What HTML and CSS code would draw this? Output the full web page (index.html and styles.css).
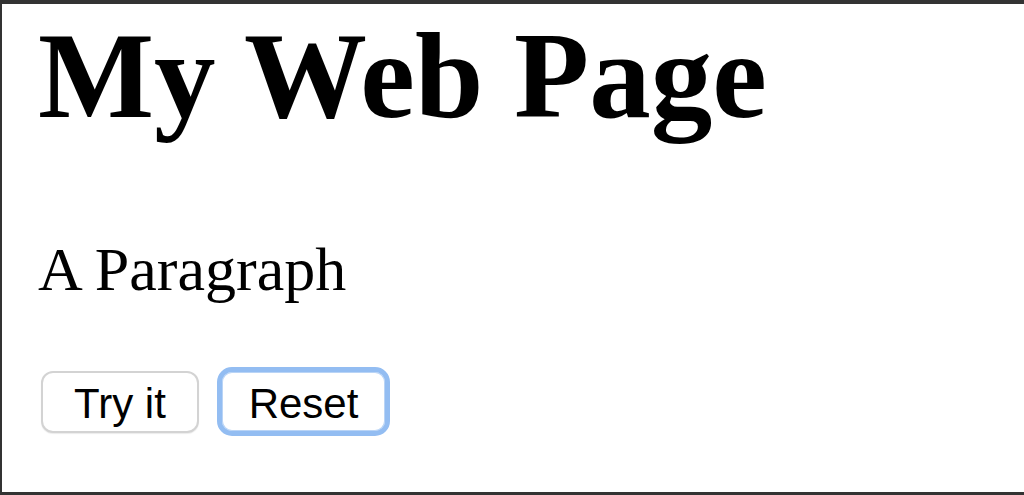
FILE: index.html
```html
<!DOCTYPE html>
<html>
<head>
<meta charset="utf-8">
<link rel="stylesheet" href="styles.css">
</head>
<body>
<div class="frame">
  <h1 class="title">My Web Page</h1>
  <p class="para">A Paragraph</p>
  <div class="actions">
    <button class="btn btn-try">Try it</button>
    <button class="btn btn-reset">Reset</button>
  </div>
</div>
</body>
</html>
```

FILE: styles.css
```css
html, body {
  margin: 0;
  padding: 0;
  background: #ffffff;
}
.frame {
  box-sizing: border-box;
  width: 1024px;
  height: 495px;
  border-top: 4px solid #333333;
  border-left: 2px solid #333333;
  border-bottom: 3px solid #333333;
  padding-left: 36px;
  display: flex;
  flex-direction: column;
  overflow: hidden;
}
.title {
  font-family: "Liberation Serif", "Times New Roman", serif;
  font-weight: bold;
  font-size: 123px;
  line-height: 1;
  margin: 10px 0 0 0;
  color: #000;
}
.para {
  font-family: "Liberation Serif", "Times New Roman", serif;
  font-size: 62px;
  line-height: 1;
  margin: 101px 0 0 0;
  color: #000;
}
.actions {
  display: flex;
  align-items: center;
  gap: 18px;
  margin: 67px 0 0 3px;
}
.btn {
  box-sizing: border-box;
  font-family: "Liberation Sans", Arial, sans-serif;
  font-size: 42px;
  color: #000;
  background: #ffffff;
  padding: 4px 0 0 0;
  text-align: center;
  line-height: 1;
}
.btn-try {
  width: 158px;
  height: 62px;
  border: 2px solid #d3d3d3;
  border-radius: 12px;
  box-shadow: 0 1px 1px rgba(0,0,0,0.08);
}
.btn-reset {
  width: 173px;
  height: 69px;
  border: 5px solid #93bdf2;
  border-radius: 15px;
  box-shadow: inset 0 0 0 1px #b9d4f6;
}
```
